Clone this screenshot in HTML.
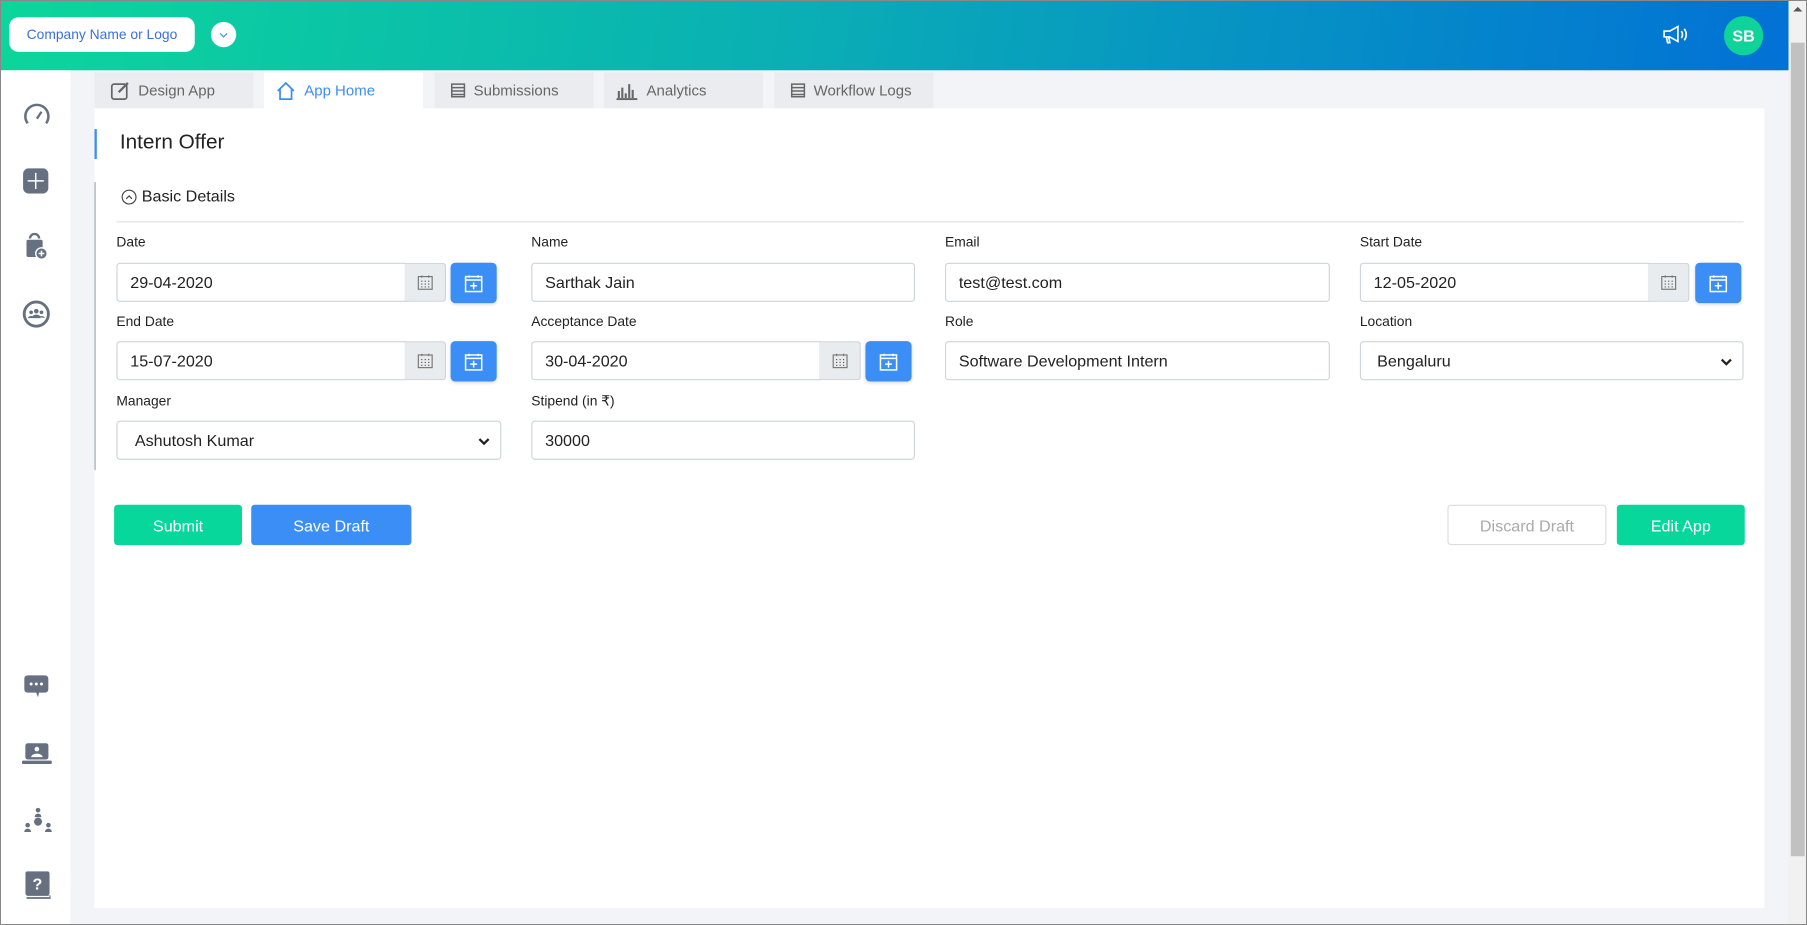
<!DOCTYPE html>
<html><head><meta charset="utf-8"><style>
*{box-sizing:border-box;margin:0;padding:0}
html,body{width:1807px;height:925px;overflow:hidden;background:#fff}
#w{position:absolute;left:0;top:0;width:1568px;height:803px;transform:scale(1.15242);transform-origin:0 0;font-family:"Liberation Sans",sans-serif;background:#f3f4f8;overflow:hidden}
#frame{position:absolute;left:0;top:0;width:1807px;height:925px;border:1px solid #888;pointer-events:none}
.a{position:absolute}
#hdr{left:0;top:0;width:1552px;height:61px;background:linear-gradient(100deg,#0cd69b 0%,#0aaeb5 45%,#0271d6 100%)}
#side{left:0;top:61px;width:61px;height:742px;background:#fff}
.tab{top:63px;height:31px;width:138px;background:#ebecef;font-size:13px;color:#666;display:flex;align-items:center;padding-left:14px;gap:7px}
.tab.on{background:#fff;color:#3b8ef5;padding-left:10px}
#panel{left:82px;top:94px;width:1449px;height:694px;background:#fff}
.lbl{font-size:12px;color:#222}
.in{height:34px;border:1px solid #ced4da;border-radius:3px;background:#fff;font-size:14px;color:#222;display:flex;align-items:center;padding-left:11px}
.add{height:34px;width:36px;background:#e9ecef;border:1px solid #ced4da;border-left:none;border-radius:0 3px 3px 0;display:flex;align-items:center;justify-content:center}
.bb{height:35px;width:40px;background:#3b8ef5;border-radius:4px;display:flex;align-items:center;justify-content:center;box-shadow:0 1px 3px rgba(0,0,0,.15)}
.btn{top:438px;height:35px;border-radius:3px;color:#fff;font-size:14px;display:flex;align-items:center;justify-content:center}
.chev{position:absolute;right:8px;top:11px}
</style></head><body><div id="w">
<div id="hdr" class="a">
 <div class="a" style="left:8px;top:15px;width:161px;height:30px;background:#fff;border-radius:8px;font-size:12px;color:#3b6fe0;display:flex;align-items:center;justify-content:center">Company Name or Logo</div>
 <div class="a" style="left:183px;top:19px;width:22px;height:22px;background:#fff;border-radius:50%"><svg width="22" height="22"><path d="M8 10l3 3 3-3" stroke="#3b8ef5" fill="none" stroke-width="1"/></svg></div>
 <svg class="a" style="left:1442px;top:21px" width="24" height="18" viewBox="0 0 24 18"><path d="M2 6h5l7-4v13l-7-4H2z M4 11l1 5h2l-1-5" stroke="#fff" fill="none" stroke-width="1.4"/><path d="M17 6q2 3 0 6M19.5 4q3.5 5 0 10" stroke="#fff" fill="none" stroke-width="1.4"/></svg>
 <div class="a" style="left:1496px;top:14px;width:34px;height:34px;border-radius:50%;background:#10d39a;color:#fff;font-weight:bold;font-size:14px;display:flex;align-items:center;justify-content:center">SB</div>
</div>
<div class="a" style="left:1552px;top:0;width:16px;height:803px;background:#f1f1f1"><div class="a" style="left:2px;top:37px;width:12px;height:706px;background:#c1c1c1"></div><svg class="a" style="left:4px;top:5px" width="8" height="6"><path d="M0 5L4 1L8 5z" fill="#555"/></svg></div>
<div id="side" class="a">
 <svg class="a" style="left:20px;top:28px" width="24" height="20"><path d="M4 18A10 10 0 1 1 20 18" stroke="#667080" stroke-width="2.2" fill="none"/><path d="M12 14l4-6" stroke="#667080" stroke-width="2"/></svg>
 <svg class="a" style="left:20px;top:85px" width="22" height="22"><rect width="22" height="22" rx="5" fill="#667080"/><path d="M11 4v14M4 11h14" stroke="#fff" stroke-width="1.3"/></svg>
 <svg class="a" style="left:21px;top:141px" width="22" height="24"><path d="M5 5a4 4 0 0 1 8 0" stroke="#667080" stroke-width="2" fill="none"/><rect x="2" y="6" width="14" height="15" rx="1.5" fill="#667080"/><circle cx="15" cy="18" r="5" fill="#667080" stroke="#fff" stroke-width="1.2"/><path d="M12.5 18h5M15 15.5v5" stroke="#fff" stroke-width="1.3"/></svg>
 <svg class="a" style="left:19px;top:199px" width="25" height="25"><circle cx="12.5" cy="12.5" r="10.5" stroke="#667080" stroke-width="2.5" fill="none"/><circle cx="12.5" cy="10" r="2" fill="#667080"/><circle cx="8" cy="11" r="1.6" fill="#667080"/><circle cx="17" cy="11" r="1.6" fill="#667080"/><path d="M8.5 16a4 3 0 0 1 8 0zM5 16a3 2.5 0 0 1 5-1v1zM15 15a3 2.5 0 0 1 5 1z" fill="#667080"/></svg>
 <svg class="a" style="left:21px;top:524px" width="21" height="21"><rect y="1" width="21" height="15" rx="3" fill="#667080"/><path d="M10 15l2 5 1-5z" fill="#667080"/><circle cx="6" cy="8.5" r="1.3" fill="#fff"/><circle cx="10.5" cy="8.5" r="1.3" fill="#fff"/><circle cx="15" cy="8.5" r="1.3" fill="#fff"/></svg>
 <svg class="a" style="left:19px;top:582px" width="26" height="22"><rect x="3" y="2" width="20" height="14" rx="2" fill="#667080"/><rect x="0" y="17" width="26" height="3" rx="1" fill="#667080"/><circle cx="13" cy="7" r="2" fill="#fff"/><path d="M8 14a5 3 0 0 1 10 0z" fill="#fff"/></svg>
 <svg class="a" style="left:20px;top:638px" width="26" height="24"><circle cx="13" cy="4" r="2" fill="#667080"/><path d="M10 10a3 3 0 0 1 6 0z" fill="#667080"/><circle cx="13" cy="14" r="3.5" fill="#667080"/><circle cx="4" cy="17" r="2" fill="#667080"/><path d="M1 23a3 3 0 0 1 6 0z" fill="#667080"/><circle cx="22" cy="17" r="2" fill="#667080"/><path d="M19 23a3 3 0 0 1 6 0z" fill="#667080"/></svg>
 <svg class="a" style="left:22px;top:695px" width="22" height="25"><rect width="21" height="21" rx="2" fill="#667080"/><rect x="1" y="21" width="21" height="3" fill="#667080"/><path d="M1 22h20" stroke="#fff"/><text x="10.5" y="16" font-family="Liberation Sans" font-weight="bold" font-size="14" fill="#fff" text-anchor="middle">?</text></svg>
</div>
<div class="a tab" style="left:82px"><svg width="17" height="17"><rect x="1" y="3" width="13" height="13" rx="2" stroke="#666" stroke-width="1.5" fill="none"/><path d="M7 10l8-8" stroke="#666" stroke-width="2"/></svg>Design App</div>
<div class="a tab on" style="left:229px"><svg width="18" height="18"><path d="M2 9L9 2l7 7M4 7v9h10V7" stroke="#3b8ef5" stroke-width="1.5" fill="none"/></svg>App Home</div>
<div class="a tab" style="left:377px"><svg width="13" height="13"><path d="M1 1h11v11H1zM1 4h11M1 7h11M1 10h11" stroke="#666" stroke-width="1.3" fill="none"/></svg>Submissions</div>
<div class="a tab" style="left:524px;padding-left:10px"><svg width="20" height="16"><path d="M1 15h18M3 8v6M6 5v9M9 10v4M12 2v12M15 7v7" stroke="#666" stroke-width="1.8"/></svg>Analytics</div>
<div class="a tab" style="left:672px"><svg width="13" height="13"><path d="M1 1h11v11H1zM1 4h11M1 7h11M1 10h11" stroke="#666" stroke-width="1.3" fill="none"/></svg>Workflow Logs</div>
<div id="panel" class="a"></div>
<div class="a" style="left:82px;top:112px;width:2px;height:26px;background:#3b8ef5"></div>
<div class="a" style="left:104px;top:113px;font-size:18px;color:#222">Intern Offer</div>
<div class="a" style="left:82px;top:158px;width:1px;height:250px;background:#9aa8b0"></div>
<svg class="a" style="left:105px;top:164px" width="14" height="14"><circle cx="7" cy="7" r="6" stroke="#444" fill="none"/><path d="M4.5 8.5L7 6l2.5 2.5" stroke="#444" fill="none"/></svg>
<div class="a" style="left:123px;top:162px;font-size:14px;color:#222">Basic Details</div>
<div class="a" style="left:101px;top:192px;width:1412px;height:1px;background:#e0e0e0"></div>

<div class="a lbl" style="left:101px;top:203px">Date</div>
<div class="a lbl" style="left:461px;top:203px">Name</div>
<div class="a lbl" style="left:820px;top:203px">Email</div>
<div class="a lbl" style="left:1180px;top:203px">Start Date</div>
<div class="a lbl" style="left:101px;top:272px">End Date</div>
<div class="a lbl" style="left:461px;top:272px">Acceptance Date</div>
<div class="a lbl" style="left:820px;top:272px">Role</div>
<div class="a lbl" style="left:1180px;top:272px">Location</div>
<div class="a lbl" style="left:101px;top:341px">Manager</div>
<div class="a lbl" style="left:461px;top:341px">Stipend (in ₹)</div>

<div class="a in" style="left:101px;top:228px;width:251px;border-radius:3px 0 0 3px">29-04-2020</div>
<div class="a add" style="left:351px;top:228px"><svg width="14" height="14"><rect x="1" y="2" width="12" height="11" stroke="#777" fill="none"/><path d="M4 1v2M10 1v2" stroke="#777"/><path d="M3.5 6h1M6.5 6h1M9.5 6h1M3.5 8.5h1M6.5 8.5h1M9.5 8.5h1M3.5 11h1M6.5 11h1M9.5 11h1" stroke="#555"/></svg></div>
<div class="a bb" style="left:391px;top:228px"><svg width="16" height="16"><rect x="1" y="2" width="14" height="13" stroke="#fff" stroke-width="1.3" fill="none"/><path d="M1 5h14M8 7v6M5 10h6M4 1v2M12 1v2" stroke="#fff" stroke-width="1.3"/></svg></div>

<div class="a in" style="left:101px;top:296px;width:251px;border-radius:3px 0 0 3px">15-07-2020</div>
<div class="a add" style="left:351px;top:296px"><svg width="14" height="14"><rect x="1" y="2" width="12" height="11" stroke="#777" fill="none"/><path d="M4 1v2M10 1v2" stroke="#777"/><path d="M3.5 6h1M6.5 6h1M9.5 6h1M3.5 8.5h1M6.5 8.5h1M9.5 8.5h1M3.5 11h1M6.5 11h1M9.5 11h1" stroke="#555"/></svg></div>
<div class="a bb" style="left:391px;top:296px"><svg width="16" height="16"><rect x="1" y="2" width="14" height="13" stroke="#fff" stroke-width="1.3" fill="none"/><path d="M1 5h14M8 7v6M5 10h6M4 1v2M12 1v2" stroke="#fff" stroke-width="1.3"/></svg></div>

<div class="a in" style="left:461px;top:296px;width:251px;border-radius:3px 0 0 3px">30-04-2020</div>
<div class="a add" style="left:711px;top:296px"><svg width="14" height="14"><rect x="1" y="2" width="12" height="11" stroke="#777" fill="none"/><path d="M4 1v2M10 1v2" stroke="#777"/><path d="M3.5 6h1M6.5 6h1M9.5 6h1M3.5 8.5h1M6.5 8.5h1M9.5 8.5h1M3.5 11h1M6.5 11h1M9.5 11h1" stroke="#555"/></svg></div>
<div class="a bb" style="left:751px;top:296px"><svg width="16" height="16"><rect x="1" y="2" width="14" height="13" stroke="#fff" stroke-width="1.3" fill="none"/><path d="M1 5h14M8 7v6M5 10h6M4 1v2M12 1v2" stroke="#fff" stroke-width="1.3"/></svg></div>

<div class="a in" style="left:1180px;top:228px;width:251px;border-radius:3px 0 0 3px">12-05-2020</div>
<div class="a add" style="left:1430px;top:228px"><svg width="14" height="14"><rect x="1" y="2" width="12" height="11" stroke="#777" fill="none"/><path d="M4 1v2M10 1v2" stroke="#777"/><path d="M3.5 6h1M6.5 6h1M9.5 6h1M3.5 8.5h1M6.5 8.5h1M9.5 8.5h1M3.5 11h1M6.5 11h1M9.5 11h1" stroke="#555"/></svg></div>
<div class="a bb" style="left:1471px;top:228px"><svg width="16" height="16"><rect x="1" y="2" width="14" height="13" stroke="#fff" stroke-width="1.3" fill="none"/><path d="M1 5h14M8 7v6M5 10h6M4 1v2M12 1v2" stroke="#fff" stroke-width="1.3"/></svg></div>

<div class="a in" style="left:461px;top:228px;width:333px">Sarthak Jain</div>
<div class="a in" style="left:820px;top:228px;width:334px">test@test.com</div>
<div class="a in" style="left:820px;top:296px;width:334px">Software Development Intern</div>
<div class="a in" style="left:1180px;top:296px;width:333px;padding-left:14px">Bengaluru<svg class="chev" width="12" height="12"><path d="M2 4l4 4 4-4" stroke="#222" stroke-width="2" fill="none"/></svg></div>
<div class="a in" style="left:101px;top:365px;width:334px;padding-left:15px">Ashutosh Kumar<svg class="chev" width="12" height="12"><path d="M2 4l4 4 4-4" stroke="#222" stroke-width="2" fill="none"/></svg></div>
<div class="a in" style="left:461px;top:365px;width:333px">30000</div>

<div class="a btn" style="left:99px;width:111px;background:#08d79c">Submit</div>
<div class="a btn" style="left:218px;width:139px;background:#3b8ef5">Save Draft</div>
<div class="a btn" style="left:1256px;width:138px;background:#fff;border:1px solid #ddd;color:#aaa">Discard Draft</div>
<div class="a btn" style="left:1403px;width:111px;background:#08d79c">Edit App</div>
</div><div id="frame"></div></body></html>
